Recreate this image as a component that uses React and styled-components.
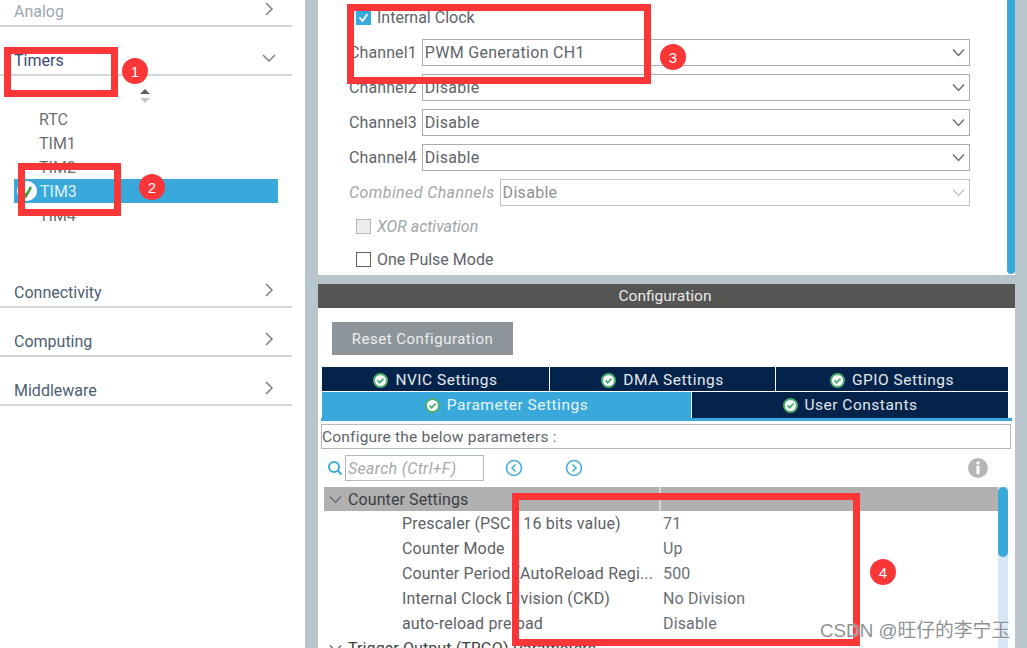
import React from 'react';
import styled, { createGlobalStyle } from 'styled-components';

const GlobalStyle = createGlobalStyle`
html, body { margin: 0; padding: 0; background: #fff; }
* { box-sizing: border-box; }
`;

const Page = styled.div`
position: relative;
width: 1027px;
height: 648px;
overflow: hidden;
display: grid;
grid-template-columns: 305px 1fr;
font-family: Roboto, "Liberation Sans", sans-serif;
font-size: 16px;
color: #555b60;
`;

/* left category tree */
const Sidebar = styled.div`
background: #fff;
width: 305px;
`;

const Category = styled.div`
width: 292px;
height: ${props => props.height || 49}px;
display: flex;
align-items: flex-end;
justify-content: space-between;
padding: 0 16px 4px 14px;
border-bottom: 2px solid #cfd6da;
font-size: 16px;
color: ${props => props.color || '#4c6071'};
`;

const Chevron = styled.svg`
width: 14px;
height: 14px;
margin-bottom: 5px;
fill: none;
stroke: ${props => props.color || '#7b8084'};
stroke-width: 1.5;
`;

const SortArrows = styled.svg`
display: block;
width: 12px;
height: 14px;
margin: 13px 0 4px 139px;
`;

const IpList = styled.div`
height: 152px;
`;

const IpRow = styled.div`
height: 24px;
width: 264px;
margin-left: 14px;
padding-left: ${props => (props.selected ? 26 : 25)}px;
display: flex;
align-items: center;
position: relative;
font-size: 16px;
color: ${props => (props.selected ? '#dff1fa' : '#6b6f73')};
background: ${props => (props.selected ? '#39a9dc' : 'transparent')};
`;

const RunBadge = styled.svg`
position: absolute;
left: 3px;
top: 2px;
width: 20px;
height: 20px;
`;

/* right side */
const Main = styled.div`
background: #b9c5cc;
padding: 0 12px 0 13px;
display: flex;
flex-direction: column;
gap: 9px;
`;

const ModePanel = styled.div`
position: relative;
height: 275px;
background: #fff;
padding: 7px 0 0 32px;
`;

const PanelScroll = styled.div`
position: absolute;
right: 0;
top: 0;
width: 8px;
height: 274px;
background: #39a9dc;
border-radius: 0 0 4px 4px;
`;

const CheckRow = styled.label`
display: flex;
align-items: center;
gap: 6px;
height: 20px;
margin: ${props => props.margin || 0};
padding-left: 6px;
font-size: 16px;
color: ${props => (props.disabled ? '#a2a6a9' : '#5f6468')};
font-style: ${props => (props.disabled ? 'italic' : 'normal')};
`;

const Box = styled.span`
width: 15px;
height: 15px;
flex: none;
display: flex;
align-items: center;
justify-content: center;
border: ${props => (props.checked ? 'none' : props.disabled ? '1.5px solid #b5b8ba' : '1.5px solid #5e6265')};
background: ${props => (props.checked ? '#39a9dc' : props.disabled ? '#ececec' : '#fff')};
`;

const ChannelRows = styled.div`
margin-top: 12px;
display: flex;
flex-direction: column;
gap: 8px;
width: 621px;
margin-left: -1px;
`;

const ChannelRow = styled.div`
display: flex;
align-items: center;
gap: 5px;
height: 27px;
`;

const ChannelLabel = styled.span`
flex: none;
font-size: 16px;
letter-spacing: ${props => (props.disabled ? '0.4px' : '0.1px')};
color: ${props => (props.disabled ? '#a2a6a9' : '#5f6468')};
font-style: ${props => (props.disabled ? 'italic' : 'normal')};
`;

const Select = styled.div`
flex: 1;
height: 27px;
display: flex;
align-items: center;
justify-content: space-between;
padding: 0 4px 0 2px;
border: 1.5px solid ${props => (props.disabled ? '#c0c4c6' : '#a8adb0')};
font-size: 16px;
letter-spacing: 0.3px;
color: ${props => (props.disabled ? '#8d9194' : '#5f6468')};
background: #fff;
`;

const SelectArrow = styled.svg`
width: 13px;
height: 13px;
fill: none;
stroke: ${props => (props.disabled ? '#c4c8ca' : '#6b7074')};
stroke-width: 1.5;
`;

const ConfigPanel = styled.div`
flex: 1;
background: #fff;
min-height: 0;
`;

const ConfigHeader = styled.div`
height: 24px;
padding-right: 3px;
background: #555654;
color: #e8e8e8;
font-size: 15.5px;
display: flex;
align-items: center;
justify-content: center;
`;

const ResetButton = styled.div`
width: 181px;
height: 33px;
margin: 14px 0 12px 14px;
background: #8e959a;
color: #eceeef;
font-size: 15px;
letter-spacing: 0.5px;
display: flex;
align-items: center;
justify-content: center;
`;

const TabRow = styled.div`
display: grid;
grid-template-columns: ${props => props.columns};
gap: 1px;
margin: 0 7px 1px 4px;
height: ${props => props.height}px;
`;

const Tab = styled.div`
background: ${props => (props.active ? '#39a9dc' : '#03234b')};
color: ${props => (props.active ? '#e8f5fb' : '#e3e8ee')};
font-size: 15.5px;
letter-spacing: 0.5px;
display: flex;
align-items: center;
justify-content: center;
gap: 7px;
padding-top: ${props => props.nudge || 0}px;
`;

const TabLine = styled.div`
height: 3px;
margin: -1px 3px 0 3px;
background: #39a9dc;
`;

const DescBox = styled.div`
height: 25px;
margin: 3px 4px 0 3px;
border: 1.5px solid #b4b9bc;
font-size: 15.5px;
letter-spacing: 0.2px;
color: #62666a;
display: flex;
align-items: center;
`;

const SearchBar = styled.div`
height: 26px;
margin: 6px 0 6px 9px;
display: flex;
align-items: center;
`;

const SearchInput = styled.div`
width: 139px;
height: 26px;
margin-left: 2px;
padding-left: 2px;
border: 1.5px solid #b4b9bc;
font-size: 16px;
letter-spacing: 0.3px;
font-style: italic;
color: #a6aaad;
display: flex;
align-items: center;
`;

const NavIcon = styled.svg`
width: ${props => props.size || 18}px;
height: ${props => props.size || 18}px;
flex: none;
margin-left: ${props => props.offset}px;
`;

const TableWrap = styled.div`
display: grid;
grid-template-columns: 674px 10px;
margin-left: 6px;
`;

const ParamTable = styled.div`
display: flex;
flex-direction: column;
`;

const GroupRow = styled.div`
height: 24px;
background: ${props => (props.plain ? 'transparent' : '#b0b0b0')};
display: grid;
grid-template-columns: 337px 1fr;
font-size: 16px;
letter-spacing: 0.1px;
color: #3b3f42;
`;

const GroupName = styled.div`
display: flex;
align-items: center;
gap: 6px;
padding-left: 5px;
white-space: nowrap;
border-right: ${props => (props.plain ? 'none' : '2px solid #d4d4d4')};
`;

const ParamRow = styled.div`
height: 25px;
display: grid;
grid-template-columns: 339px 1fr;
align-items: center;
font-size: 16px;
letter-spacing: 0.15px;
color: #5d6266;
`;

const ParamName = styled.span`
padding-left: 78px;
white-space: nowrap;
overflow: hidden;
`;

const ParamValue = styled.span`
color: #6a6f73;
`;

const TableScroll = styled.div`
position: relative;
background: #d7e7f5;
height: 162px;
`;

const ScrollThumb = styled.div`
height: 70px;
background: #39a9dc;
border-radius: 5px;
`;

/* things pasted on the screenshot */
const RedBox = styled.div`
position: absolute;
left: ${props => props.x}px;
top: ${props => props.y}px;
width: ${props => props.w}px;
height: ${props => props.h}px;
border: 7px solid #fb3636;
`;

const RedDot = styled.div`
position: absolute;
left: ${props => props.x - 13}px;
top: ${props => props.y - 13}px;
width: 26px;
height: 26px;
border-radius: 50%;
background: #fb3636;
color: #fff;
font-family: "Liberation Sans", sans-serif;
font-size: 15px;
display: flex;
align-items: center;
justify-content: center;
`;

const Watermark = styled.div`
position: absolute;
left: 820px;
top: 615px;
font-family: "Liberation Sans", "Noto Sans CJK SC", sans-serif;
font-size: 18.8px;
white-space: nowrap;
color: #8d9296;
text-shadow: 0 0 2px #fff;
`;

const Right = () => (
  <Chevron viewBox="0 0 14 14"><path d="M4 1l6 6-6 6" /></Chevron>
);

const Down = ({ color }) => (
  <Chevron viewBox="0 0 14 14" color={color}><path d="M1 4l6 6 6-6" /></Chevron>
);

const GroupArrow = () => (
  <SelectArrow viewBox="0 0 13 13"><path d="M1 3.5l5.5 6 5.5-6" /></SelectArrow>
);

const Arrow = ({ disabled }) => (
  <SelectArrow viewBox="0 0 13 13" disabled={disabled}><path d="M1 3.5l5.5 6 5.5-6" /></SelectArrow>
);

const TabCheck = () => (
  <svg width="15" height="15" viewBox="0 0 15 15">
    <circle cx="7.5" cy="7.5" r="6.5" fill="#fff" stroke="#4caf6e" strokeWidth="2" />
    <path d="M4.5 7.5l2.2 2.2 3.8-4" fill="none" stroke="#4caf6e" strokeWidth="1.8" />
  </svg>
);

const NavButton = ({ offset, back }) => (
  <NavIcon viewBox="0 0 18 18" offset={offset}>
    <circle cx="9" cy="9" r="7.5" fill="#fff" stroke="#45addf" strokeWidth="1.6" />
    <path d={back ? 'M10.5 5.5L7 9l3.5 3.5' : 'M7.5 5.5L11 9l-3.5 3.5'} fill="none" stroke="#45addf" strokeWidth="1.6" />
  </NavIcon>
);

const channels = [
  { name: 'Channel1', value: 'PWM Generation CH1' },
  { name: 'Channel2', value: 'Disable' },
  { name: 'Channel3', value: 'Disable' },
  { name: 'Channel4', value: 'Disable' },
];

const params = [
  { name: 'Prescaler (PSC - 16 bits value)', value: '71' },
  { name: 'Counter Mode', value: 'Up' },
  { name: 'Counter Period (AutoReload Regi...', value: '500' },
  { name: 'Internal Clock Division (CKD)', value: 'No Division' },
  { name: 'auto-reload preload', value: 'Disable' },
];

const App = () => (
  <>
    <GlobalStyle />
    <Page>
      <Sidebar>
        <Category height={27} color="#a0a7ae">Analog<Right /></Category>
        <Category color="#3d4a78">Timers<Down /></Category>
        <SortArrows viewBox="0 0 12 14">
          <path d="M6 0l5 5H1z" fill="#5d6266" />
          <path d="M6 14l5-5H1z" fill="#c6c8ca" />
        </SortArrows>
        <IpList>
          <IpRow>RTC</IpRow>
          <IpRow>TIM1</IpRow>
          <IpRow>TIM2</IpRow>
          <IpRow selected>
            <RunBadge viewBox="0 0 20 20">
              <circle cx="10" cy="10" r="10" fill="#fff" />
              <path d="M6 11l3 4 5-9" fill="none" stroke="#43a047" strokeWidth="2.6" />
            </RunBadge>
            TIM3
          </IpRow>
          <IpRow>TIM4</IpRow>
        </IpList>
        <Category>Connectivity<Right /></Category>
        <Category>Computing<Right /></Category>
        <Category>Middleware<Right /></Category>
      </Sidebar>

      <Main>
        <ModePanel>
          <CheckRow>
            <Box checked>
              <svg width="11" height="11" viewBox="0 0 11 11">
                <path d="M1.5 5.5l3 3.5 5-7" fill="none" stroke="#fff" strokeWidth="1.8" />
              </svg>
            </Box>
            Internal Clock
          </CheckRow>
          <ChannelRows>
            {channels.map((channel) => (
              <ChannelRow key={channel.name}>
                <ChannelLabel>{channel.name}</ChannelLabel>
                <Select>{channel.value}<Arrow /></Select>
              </ChannelRow>
            ))}
            <ChannelRow>
              <ChannelLabel disabled>Combined Channels</ChannelLabel>
              <Select disabled>Disable<Arrow disabled /></Select>
            </ChannelRow>
          </ChannelRows>
          <CheckRow disabled margin="10px 0 0 0"><Box disabled />XOR activation</CheckRow>
          <CheckRow margin="13px 0 0 0"><Box />One Pulse Mode</CheckRow>
          <PanelScroll />
        </ModePanel>

        <ConfigPanel>
          <ConfigHeader>Configuration</ConfigHeader>
          <ResetButton>Reset Configuration</ResetButton>
          <TabRow columns="227px 225px 1fr" height={24}>
            <Tab nudge={2}><TabCheck />NVIC Settings</Tab>
            <Tab nudge={2}><TabCheck />DMA Settings</Tab>
            <Tab nudge={2}><TabCheck />GPIO Settings</Tab>
          </TabRow>
          <TabRow columns="369px 1fr" height={26}>
            <Tab active><TabCheck />Parameter Settings</Tab>
            <Tab><TabCheck />User Constants</Tab>
          </TabRow>
          <TabLine />
          <DescBox>Configure the below parameters :</DescBox>
          <SearchBar>
            <svg width="16" height="16" viewBox="0 0 16 16">
              <circle cx="7" cy="7" r="5" fill="none" stroke="#39a9dc" strokeWidth="2" />
              <path d="M10.5 10.5l4 4" stroke="#39a9dc" strokeWidth="2" />
            </svg>
            <SearchInput>Search (Ctrl+F)</SearchInput>
            <NavButton back offset={21} />
            <NavButton offset={42} />
            <NavIcon viewBox="0 0 20 20" offset={385} size={20}>
              <circle cx="10" cy="10" r="10" fill="#b4b6b8" />
              <rect x="8.5" y="8" width="3" height="8" fill="#fff" />
              <circle cx="10" cy="5" r="1.8" fill="#fff" />
            </NavIcon>
          </SearchBar>
          <TableWrap>
            <ParamTable>
              <GroupRow>
                <GroupName><GroupArrow />Counter Settings</GroupName>
                <div />
              </GroupRow>
              {params.map((param) => (
                <ParamRow key={param.name}>
                  <ParamName>{param.name}</ParamName>
                  <ParamValue>{param.value}</ParamValue>
                </ParamRow>
              ))}
              <GroupRow plain>
                <GroupName plain><GroupArrow />Trigger Output (TRGO) Parameters</GroupName>
              </GroupRow>
            </ParamTable>
            <TableScroll><ScrollThumb /></TableScroll>
          </TableWrap>
        </ConfigPanel>
      </Main>

      <RedBox x={4} y={47} w={114} h={50} />
      <RedBox x={18} y={163} w={103} h={53} />
      <RedBox x={347} y={4} w={304} h={80} />
      <RedBox x={512} y={493} w={348} h={153} />
      <RedDot x={135} y={71}>1</RedDot>
      <RedDot x={152} y={187}>2</RedDot>
      <RedDot x={673} y={57}>3</RedDot>
      <RedDot x={883} y={572}>4</RedDot>
      <Watermark>CSDN @旺仔的李宁玉</Watermark>
    </Page>
  </>
);

export default App;
